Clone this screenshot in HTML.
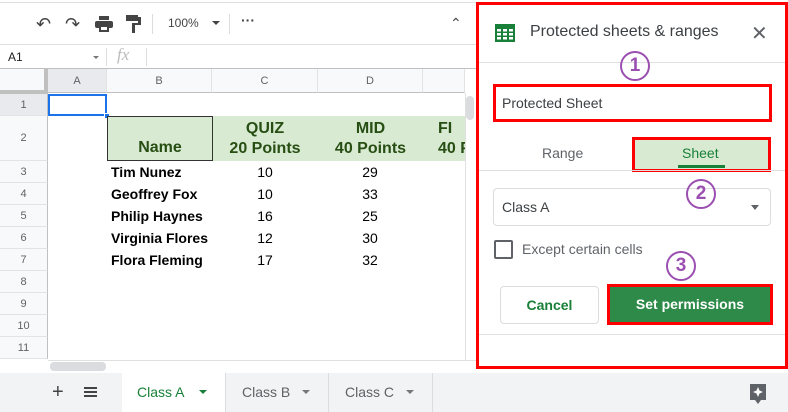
<!DOCTYPE html>
<html><head><style>
*{box-sizing:border-box;margin:0;padding:0}
body{width:788px;height:412px;position:relative;overflow:hidden;background:#fff;font-family:"Liberation Sans",Arial,sans-serif}
.a{position:absolute}
.rh{position:absolute;left:0;width:48px;background:#f8f9fa;border-bottom:1px solid #e2e3e3;border-right:1px solid #c0c0c0;color:#5f6368;font-size:11px;text-align:center}
.ch{position:absolute;top:69px;height:24px;background:#f8f9fa;border-right:1px solid #e2e3e3;border-bottom:1px solid #c0c0c0;color:#5f6368;font-size:11px;text-align:center;line-height:24px}
.nm{position:absolute;left:111px;font-weight:bold;font-size:14px;color:#000}
.n{position:absolute;font-size:14px;color:#000;width:40px;text-align:center}
.circ{position:absolute;width:30px;height:30px;border:2px solid #9b4fb0;border-radius:50%;color:#9b4fb0;font-size:19px;font-weight:bold;text-align:center;line-height:26px;background:transparent}
</style></head><body>
<!-- toolbar -->
<div class="a" style="left:0;top:0;width:476px;height:3px;border-bottom:1px solid #e0e0e0"></div>
<div class="a" style="left:36px;top:14px;font-size:18px;color:#444">&#8630;</div>
<div class="a" style="left:65px;top:14px;font-size:18px;color:#444">&#8631;</div>
<svg class="a" style="left:95px;top:16px" width="18" height="16"><rect x="4" y="0" width="10" height="4" fill="#444"/><rect x="0" y="5" width="18" height="7" rx="2" fill="#444"/><rect x="4" y="10" width="10" height="6" fill="#444"/><rect x="6" y="11" width="6" height="3" fill="#fff"/></svg>
<svg class="a" style="left:126px;top:15px" width="16" height="18"><rect x="0" y="0" width="12" height="6" fill="#444"/><rect x="12" y="2" width="3" height="6" fill="#444"/><rect x="6" y="8" width="9" height="2" fill="#444"/><rect x="6" y="8" width="3" height="10" fill="#444"/></svg>
<div class="a" style="left:152px;top:14px;width:1px;height:20px;background:#ddd"></div>
<div class="a" style="left:168px;top:16px;font-size:12px;color:#444">100%</div>
<div class="a" style="left:212px;top:21px;border:4px solid transparent;border-top:4px solid #444"></div>
<div class="a" style="left:229px;top:14px;width:1px;height:20px;background:#ddd"></div>
<div class="a" style="left:241px;top:12px;font-size:14px;color:#444;font-weight:bold">&middot;&middot;&middot;</div>
<div class="a" style="left:450px;top:15px;font-size:14px;color:#444">&#8963;</div>
<!-- formula -->
<div class="a" style="left:0;top:44px;width:476px;height:25px;border-top:1px solid #e0e0e0;border-bottom:1px solid #c0c0c0"></div>
<div class="a" style="left:8px;top:50px;font-size:12px;color:#222">A1</div>
<div class="a" style="left:93px;top:56px;border:3px solid transparent;border-top:3px solid #777"></div>
<div class="a" style="left:106px;top:48px;width:1px;height:18px;background:#ddd"></div>
<div class="a" style="left:117px;top:45px;font-size:17px;color:#bbb;font-style:italic;font-family:'Liberation Serif',serif">fx</div>
<div class="a" style="left:146px;top:48px;width:1px;height:18px;background:#ddd"></div>
<!-- column headers -->
<div class="ch" style="left:0;width:48px;border-right:4px solid #c0c0c0;border-bottom:4px solid #c0c0c0;height:25px"></div>
<div class="ch" style="left:48px;width:59px;background:#e8eaed">A</div>
<div class="ch" style="left:107px;width:105px">B</div>
<div class="ch" style="left:212px;width:106px">C</div>
<div class="ch" style="left:318px;width:105px">D</div>
<div class="ch" style="left:423px;width:42px"></div>
<!-- row headers -->
<div class="rh" style="top:94px;height:22px;line-height:22px;background:#e8eaed">1</div>
<div class="rh" style="top:116px;height:45px;line-height:45px">2</div>
<div class="rh" style="top:161px;height:22px;line-height:22px">3</div>
<div class="rh" style="top:183px;height:22px;line-height:22px">4</div>
<div class="rh" style="top:205px;height:22px;line-height:22px">5</div>
<div class="rh" style="top:227px;height:22px;line-height:22px">6</div>
<div class="rh" style="top:249px;height:22px;line-height:22px">7</div>
<div class="rh" style="top:271px;height:22px;line-height:22px">8</div>
<div class="rh" style="top:293px;height:22px;line-height:22px">9</div>
<div class="rh" style="top:315px;height:22px;line-height:22px">10</div>
<div class="rh" style="top:337px;height:22px;line-height:22px">11</div>
<!-- selection -->
<div class="a" style="left:48px;top:94px;width:59px;height:22px;border:2px solid #1a73e8"></div>
<div class="a" style="left:104px;top:113px;width:6px;height:6px;background:#1a73e8;border:1px solid #fff"></div>
<!-- header row -->
<div class="a" style="left:107px;top:116px;width:358px;height:45px;background:#d9ead3"></div>
<div class="a" style="left:107px;top:116px;width:106px;height:45px;border:1px solid #333"></div>
<div class="a" style="left:107px;top:139px;width:106px;text-align:center;font-weight:bold;font-size:16px;color:#274e13">Name</div>
<div class="a" style="left:212px;top:119px;width:106px;text-align:center;font-weight:bold;font-size:16px;color:#274e13;line-height:20px">QUIZ<br>20 Points</div>
<div class="a" style="left:318px;top:119px;width:105px;text-align:center;font-weight:bold;font-size:16px;color:#274e13;line-height:20px">MID<br>40 Points</div>
<div class="a" style="left:438px;top:119px;font-weight:bold;font-size:16px;color:#274e13;line-height:20px;white-space:nowrap">FI<br>40 P</div>
<!-- data -->
<div class="nm" style="top:164px">Tim Nunez</div>
<div class="nm" style="top:186px">Geoffrey Fox</div>
<div class="nm" style="top:208px">Philip Haynes</div>
<div class="nm" style="top:230px">Virginia Flores</div>
<div class="nm" style="top:252px">Flora Fleming</div>
<div class="n" style="left:245px;top:164px">10</div><div class="n" style="left:350px;top:164px">29</div>
<div class="n" style="left:245px;top:186px">10</div><div class="n" style="left:350px;top:186px">33</div>
<div class="n" style="left:245px;top:208px">16</div><div class="n" style="left:350px;top:208px">25</div>
<div class="n" style="left:245px;top:230px">12</div><div class="n" style="left:350px;top:230px">30</div>
<div class="n" style="left:245px;top:252px">17</div><div class="n" style="left:350px;top:252px">32</div>
<!-- scrollbars -->
<div class="a" style="left:465px;top:93px;width:11px;height:267px;background:#fff;border-left:1px solid #e0e0e0"></div>
<div class="a" style="left:466px;top:96px;width:8px;height:24px;background:#dadce0;border-radius:4px"></div>
<div class="a" style="left:48px;top:360px;width:428px;height:13px;border-top:1px solid #e0e0e0;background:#fff"></div>
<div class="a" style="left:50px;top:362px;width:56px;height:9px;background:#dadce0;border-radius:4px"></div>
<!-- tabs -->
<div class="a" style="left:0;top:373px;width:788px;height:39px;background:#f1f3f4"></div>
<div class="a" style="left:52px;top:381px;font-size:20px;color:#444">+</div>
<div class="a" style="left:84px;top:387px;width:13px;height:10px;border-top:2px solid #444;border-bottom:2px solid #444"></div>
<div class="a" style="left:84px;top:391px;width:13px;height:2px;background:#444"></div>
<div class="a" style="left:122px;top:373px;width:103px;height:39px;background:#fff"></div>
<div class="a" style="left:137px;top:384px;font-size:14px;color:#188038">Class A</div>
<div class="a" style="left:199px;top:390px;border:4px solid transparent;border-top:4px solid #188038"></div>
<div class="a" style="left:225px;top:373px;width:1px;height:39px;background:#dadce0"></div>
<div class="a" style="left:242px;top:384px;font-size:14px;color:#5f6368">Class B</div>
<div class="a" style="left:302px;top:390px;border:4px solid transparent;border-top:4px solid #777"></div>
<div class="a" style="left:328px;top:373px;width:1px;height:39px;background:#dadce0"></div>
<div class="a" style="left:345px;top:384px;font-size:14px;color:#5f6368">Class C</div>
<div class="a" style="left:406px;top:390px;border:4px solid transparent;border-top:4px solid #777"></div>
<div class="a" style="left:432px;top:373px;width:1px;height:39px;background:#dadce0"></div>
<svg class="a" style="left:749px;top:383px" width="18" height="22"><path d="M1 1h16v16h-5l-3 4-3-4H1z" fill="#5f6368"/><path d="M9 4l1.5 3.5L14 9l-3.5 1.5L9 14l-1.5-3.5L4 9l3.5-1.5z" fill="#fff"/></svg>
<!-- panel -->
<div class="a" style="left:476px;top:2px;width:312px;height:367px;background:#fff;border:3px solid #ff0000"></div>
<svg class="a" style="left:495px;top:24px" width="20" height="18"><rect x="0" y="0" width="20" height="18" fill="#188038"/><g fill="#fff"><rect x="2" y="5" width="4" height="2.5"/><rect x="8" y="5" width="4" height="2.5"/><rect x="14" y="5" width="4" height="2.5"/><rect x="2" y="9" width="4" height="2.5"/><rect x="8" y="9" width="4" height="2.5"/><rect x="14" y="9" width="4" height="2.5"/><rect x="2" y="13" width="4" height="2.5"/><rect x="8" y="13" width="4" height="2.5"/><rect x="14" y="13" width="4" height="2.5"/></g></svg>
<div class="a" style="left:530px;top:23px;font-size:16px;color:#3c4043">Protected sheets &amp; ranges</div>
<div class="a" style="left:751px;top:21px;font-size:20px;color:#5f6368">&#x2715;</div>
<div class="a" style="left:479px;top:62px;width:306px;height:1px;background:#e0e0e0"></div>
<div class="circ" style="left:620px;top:51px">1</div>
<div class="a" style="left:493px;top:84px;width:279px;height:38px;border:3px solid #ff0000"></div>
<div class="a" style="left:502px;top:95px;font-size:14px;color:#3c4043">Protected Sheet</div>
<div class="a" style="left:542px;top:145px;font-size:14px;color:#5f6368">Range</div>
<div class="a" style="left:632px;top:137px;width:139px;height:35px;background:#d9ead3;border:3px solid #ff0000"></div>
<div class="a" style="left:682px;top:145px;font-size:14px;color:#188038">Sheet</div>
<div class="a" style="left:678px;top:165px;width:47px;height:3px;background:#188038"></div>
<div class="a" style="left:479px;top:170px;width:306px;height:1px;background:#e0e0e0"></div>
<div class="a" style="left:493px;top:188px;width:278px;height:38px;border:1px solid #dadce0;border-radius:4px"></div>
<div class="a" style="left:502px;top:199px;font-size:14px;color:#3c4043">Class A</div>
<div class="a" style="left:751px;top:205px;border:4px solid transparent;border-top:5px solid #5f6368"></div>
<div class="circ" style="left:686px;top:179px">2</div>
<div class="a" style="left:494px;top:240px;width:19px;height:19px;border:2px solid #5f6368;border-radius:2px"></div>
<div class="a" style="left:522px;top:241px;font-size:14px;color:#5f6368">Except certain cells</div>
<div class="circ" style="left:666px;top:251px">3</div>
<div class="a" style="left:500px;top:286px;width:99px;height:38px;border:1px solid #dadce0;border-radius:4px;text-align:center;line-height:36px;font-size:14px;color:#188038;font-weight:bold">Cancel</div>
<div class="a" style="left:607px;top:284px;width:166px;height:41px;border:3px solid #ff0000;background:#2d8a48;text-align:center;line-height:35px;font-size:14px;color:#fff;font-weight:bold">Set permissions</div>
<div class="a" style="left:479px;top:334px;width:306px;height:1px;background:#e0e0e0"></div>
</body></html>
